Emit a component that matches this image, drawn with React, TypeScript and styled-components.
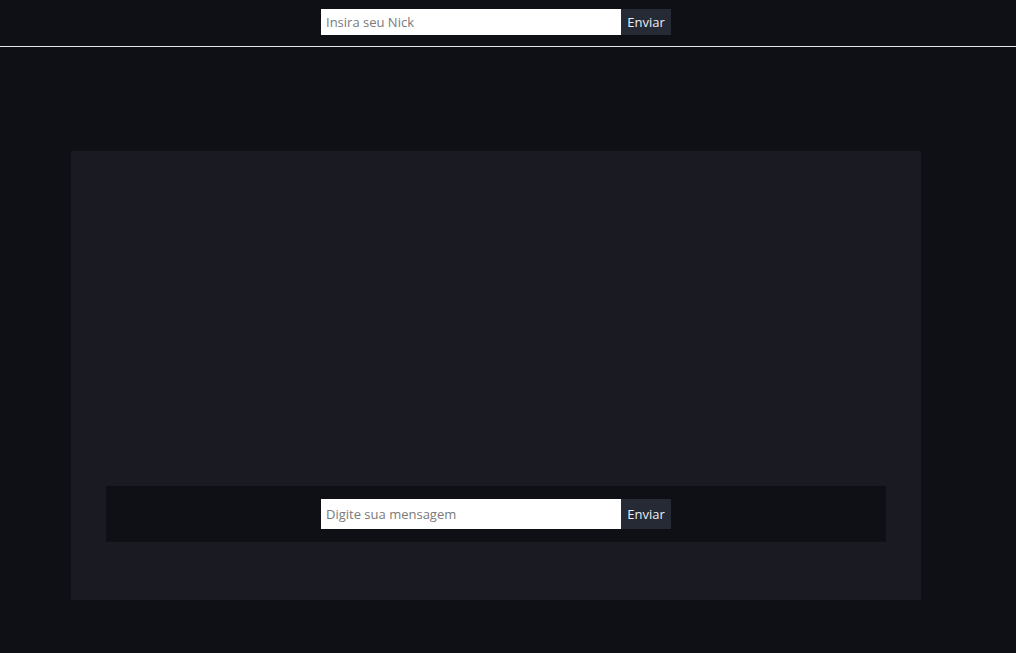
import { FC } from 'react';
import styled, { createGlobalStyle } from 'styled-components';

const GlobalStyle = createGlobalStyle`
    html, body {
        margin: 0;
        padding: 0;
        background-color: #0f1015;
        font-family: "Open Sans", "Noto Sans", Arial, sans-serif;
    }
    * { box-sizing: border-box; }
`;

const Header = styled.header`
    display: flex;
    align-items: flex-start;
    justify-content: center;
    height: 47px;
    padding: 9px 24px 0 0;
    border-bottom: 1px solid #e8e8e8;
    background-color: #0f1015;
`;

const Form = styled.form<{ $height: number }>`
    display: flex;
    height: ${p => p.$height}px;
`;

const Input = styled.input`
    width: 300px;
    height: 100%;
    padding: 0 5px;
    border: 0;
    outline: 0;
    font-family: inherit;
    font-size: 13px;
    color: #333;
    background: #fff;
    &::placeholder { color: #7a7a7a; }
`;

const Button = styled.button`
    width: 50px;
    height: 100%;
    padding: 0;
    border: 0;
    font-family: inherit;
    font-size: 13px;
    color: #eceef2;
    background-color: #262a35;
    cursor: pointer;
`;

const Chat = styled.main`
    display: flex;
    flex-direction: column;
    justify-content: flex-end;
    width: 850px;
    height: 449px;
    margin: 104px 0 0 71px;
    padding: 0 35px 58px;
    background-color: #191a22;
`;

const MessageBar = styled.div`
    display: flex;
    align-items: center;
    justify-content: center;
    height: 56px;
    background-color: #0f1015;
`;

const SendForm: FC<{ placeholder: string; height: number }> = ({ placeholder, height }) => (
    <Form $height={height} onSubmit={e => e.preventDefault()}>
        <Input placeholder={placeholder} />
        <Button type="submit">Enviar</Button>
    </Form>
);

const App: FC = () => (
    <>
        <GlobalStyle />
        <Header>
            <SendForm placeholder="Insira seu Nick" height={26} />
        </Header>
        <Chat>
            <MessageBar>
                <SendForm placeholder="Digite sua mensagem" height={30} />
            </MessageBar>
        </Chat>
    </>
);

export default App;
